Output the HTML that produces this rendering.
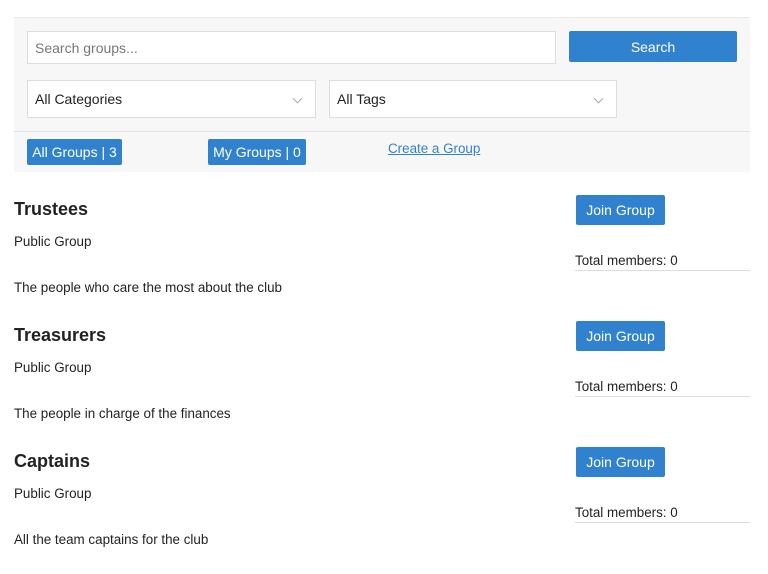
<!DOCTYPE html><html><head><style>
body{margin:0;width:768px;height:574px;background:#fff;font-family:"Liberation Sans",sans-serif;color:#222;position:relative;overflow:hidden}
.a{position:absolute}
.panel{left:14px;top:17px;width:736px;height:154px;background:#f7f7f7;border-top:1px solid #eaeaea}
.inp{background:#fff;border:1px solid #ddd;box-sizing:border-box;font-size:14px;padding-left:7px;line-height:100%;display:flex;align-items:center}
.btn{background:#3182ce;color:#fff;font-size:14px;display:flex;align-items:center;justify-content:center;border-radius:2px;box-sizing:border-box}
.chev{position:absolute;right:14px;top:14px;width:6px;height:6px;border-right:1px solid #aaa;border-bottom:1px solid #aaa;transform:rotate(45deg)}
h2{position:absolute;margin:0;font-size:18px;font-weight:bold;left:14px}
.t{position:absolute;font-size:13.4px;left:14px}
.mem{position:absolute;left:575px;width:175px;font-size:13.4px;border-bottom:1px solid #ddd;padding-bottom:2px}
</style></head><body>
<div class="a panel"></div>
<div class="a" style="left:14px;top:131px;width:736px;height:1px;background:#e3e3e3"></div>
<div class="a inp" style="left:27px;top:31px;width:529px;height:33px;color:#777">Search groups...</div>
<div class="a btn" style="left:569px;top:31px;width:168px;height:31px">Search</div>
<div class="a inp" style="left:27px;top:80px;width:289px;height:38px;color:#222">All Categories<span class="chev"></span></div>
<div class="a inp" style="left:329px;top:80px;width:288px;height:38px;color:#222">All Tags<span class="chev"></span></div>
<div class="a btn" style="left:27px;top:139px;width:95px;height:26px">All Groups | 3</div>
<div class="a btn" style="left:208px;top:139px;width:98px;height:26px">My Groups | 0</div>
<div class="a" style="left:388px;top:141px;font-size:13.4px;color:#3182ce;text-decoration:underline">Create a Group</div>

<h2 style="top:199px">Trustees</h2>
<div class="t" style="top:234px">Public Group</div>
<div class="t" style="top:280px">The people who care the most about the club</div>
<div class="a btn" style="left:576px;top:195px;width:89px;height:30px">Join Group</div>
<div class="mem" style="top:253px">Total members: 0</div>

<h2 style="top:325px">Treasurers</h2>
<div class="t" style="top:360px">Public Group</div>
<div class="t" style="top:406px">The people in charge of the finances</div>
<div class="a btn" style="left:576px;top:321px;width:89px;height:30px">Join Group</div>
<div class="mem" style="top:379px">Total members: 0</div>

<h2 style="top:451px">Captains</h2>
<div class="t" style="top:486px">Public Group</div>
<div class="t" style="top:532px">All the team captains for the club</div>
<div class="a btn" style="left:576px;top:447px;width:89px;height:30px">Join Group</div>
<div class="mem" style="top:505px">Total members: 0</div>
</body></html>
